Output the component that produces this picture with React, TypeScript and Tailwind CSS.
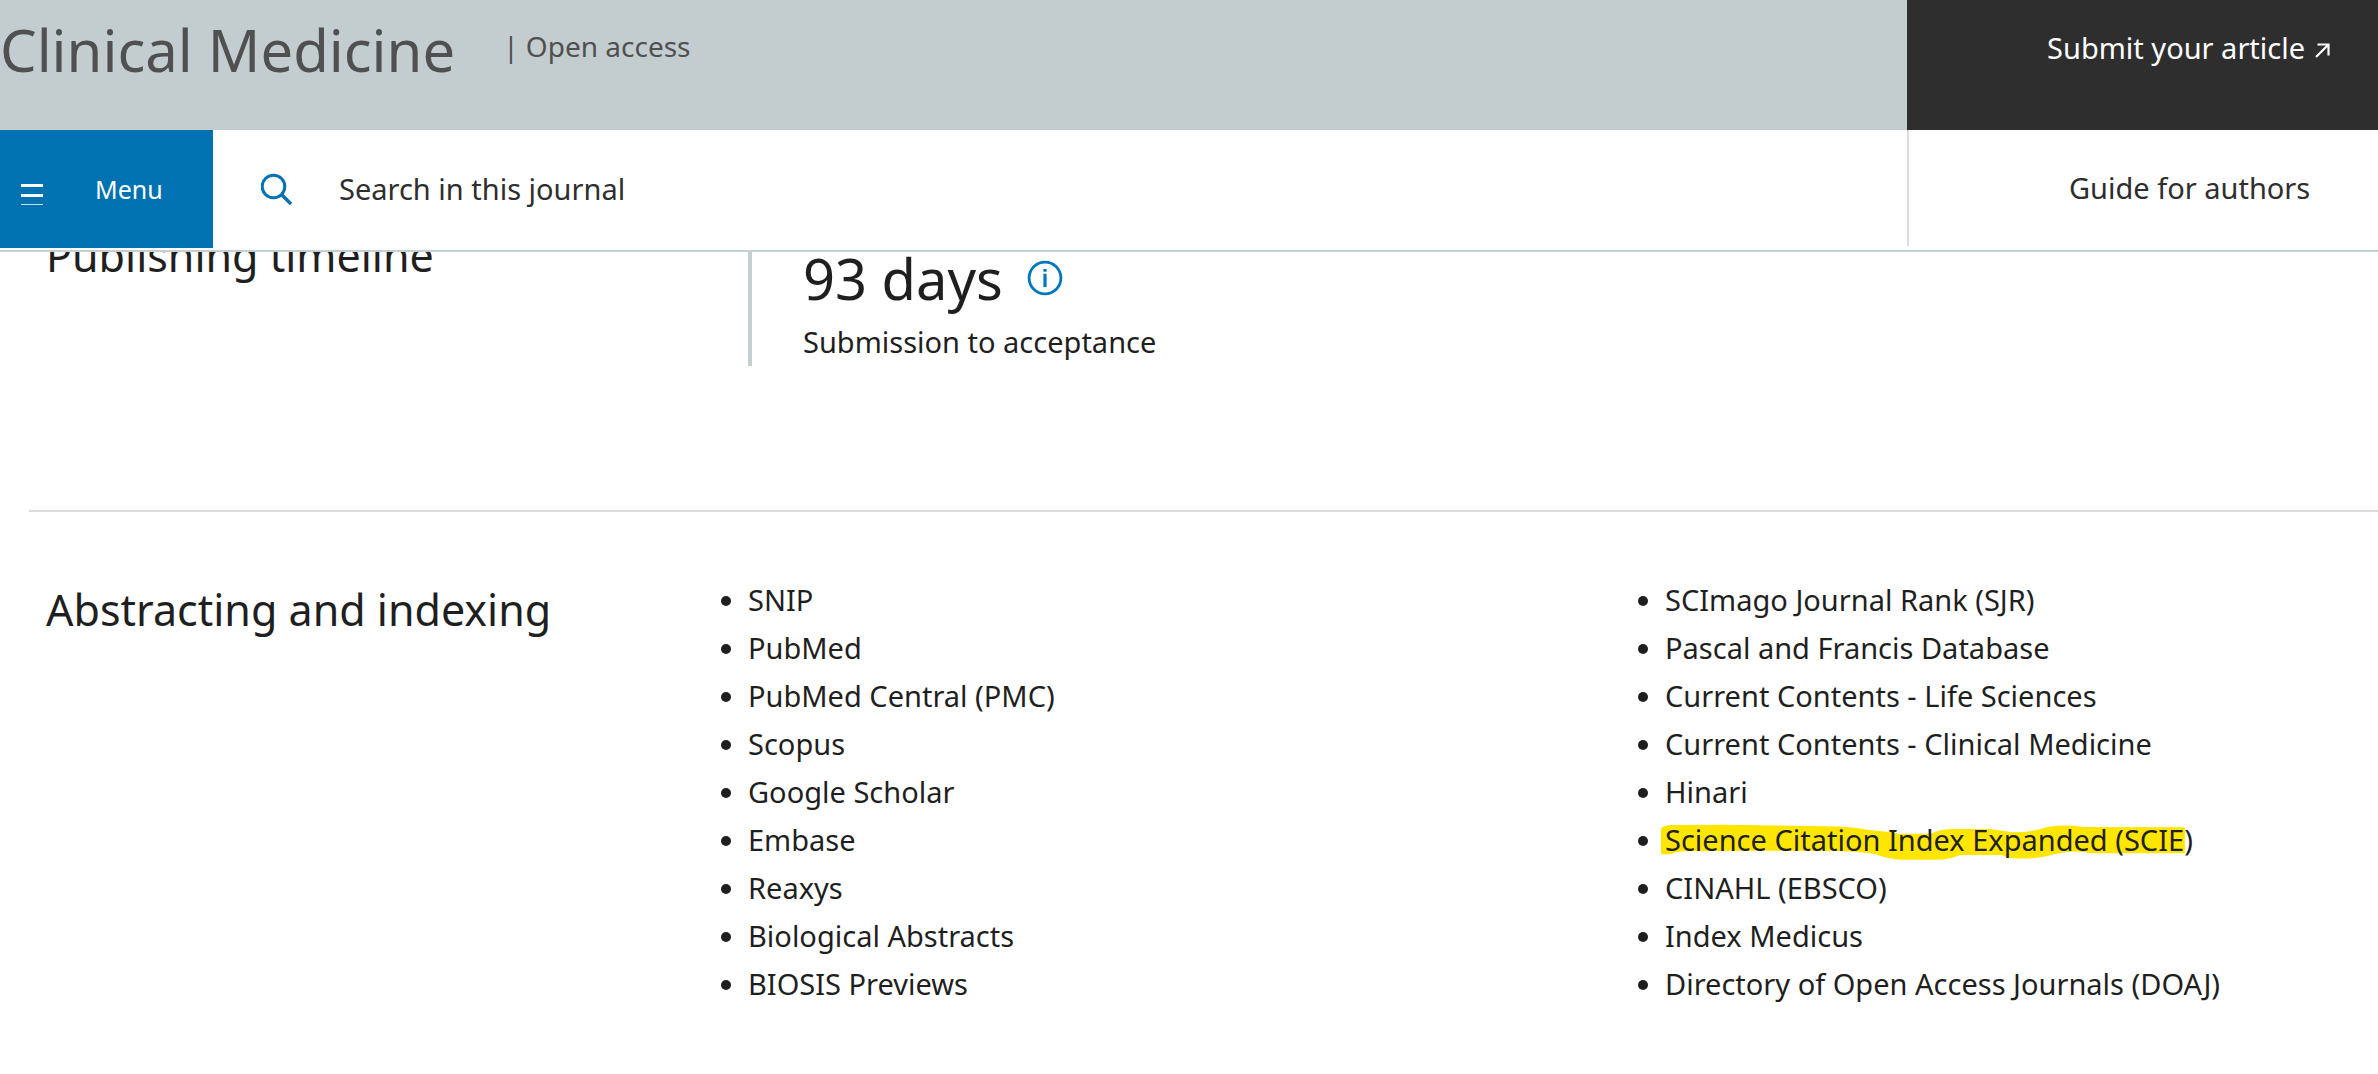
/**
 * Journal home page: sticky journal header, publishing timeline
 * and abstracting / indexing section
 */

const indexingLeft = [
  "SNIP",
  "PubMed",
  "PubMed Central (PMC)",
  "Scopus",
  "Google Scholar",
  "Embase",
  "Reaxys",
  "Biological Abstracts",
  "BIOSIS Previews",
];

const indexingRight = [
  "SCImago Journal Rank (SJR)",
  "Pascal and Francis Database",
  "Current Contents - Life Sciences",
  "Current Contents - Clinical Medicine",
  "Hinari",
  "Science Citation Index Expanded (SCIE)",
  "CINAHL (EBSCO)",
  "Index Medicus",
  "Directory of Open Access Journals (DOAJ)",
];

const MARKED = "Science Citation Index Expanded (SCIE)";

function MenuIcon() {
  return (
    <svg width="22" height="24" viewBox="0 0 22 24" aria-hidden="true">
      <path d="M0 1h22v3H0zM0 11h22v3H0z" fill="#fff" />
      <path d="M0 21h22v1H0z" fill="#fff" opacity="0.8" />
    </svg>
  );
}

function SearchIcon() {
  return (
    <svg
      width="32"
      height="32"
      viewBox="0 0 32 32"
      fill="none"
      stroke="#0072b1"
      strokeWidth="3"
      aria-hidden="true"
    >
      <circle cx="12.5" cy="13.5" r="11.3" />
      <path d="M20.5 21.5l9.5 9.5" strokeWidth="3.4" />
    </svg>
  );
}

function ArrowIcon() {
  return (
    <svg
      width="15"
      height="15"
      viewBox="0 0 15 15"
      fill="none"
      stroke="currentColor"
      strokeWidth="2.2"
      aria-hidden="true"
    >
      <path d="M2.5 1.5H13.5V12.5M13.5 1.5L1 14" />
    </svg>
  );
}

function InfoIcon() {
  return (
    <svg width="36" height="36" viewBox="0 0 36 36" fill="none" aria-hidden="true">
      <circle cx="18" cy="18" r="15.9" stroke="#0077bb" strokeWidth="2.8" />
      <path d="M16.4 9h3.2v2.8h-3.2zM16.4 13.8h3.2V27h-3.2z" fill="#0077bb" />
    </svg>
  );
}

// Hand-drawn marker stroke behind the text
function Marked({ text }: { text: string }) {
  return (
    <mark className="relative inline-block bg-transparent text-inherit">
      <svg
        className="absolute -left-1 right-1 top-2 h-9 w-full"
        viewBox="0 0 1448 100"
        preserveAspectRatio="none"
        aria-hidden="true"
      >
        <path
          fill="#ffe600"
          d="M0 12Q10 3 30 3L170 2L490 7Q540 10 580 18Q640 22 650 27H740Q765 14 800 14H900Q935 18 960 23Q1010 25 1060 8Q1110 0 1160 8L1437 9V81H1180Q1130 70 1080 84Q1040 96 990 96Q950 96 935 86H820Q790 100 750 99H660Q620 98 590 84Q560 78 480 75L240 74L60 76Q40 78 25 84H0Z"
        />
      </svg>
      <span className="relative">{text}</span>
    </mark>
  );
}

function IndexList({ items }: { items: string[] }) {
  return (
    <ul className="list-disc">
      {items.map((item) => (
        <li key={item}>{item === MARKED ? <Marked text={item} /> : item}</li>
      ))}
    </ul>
  );
}

export default function App() {
  return (
    <div className="min-h-screen bg-white font-['Noto_Sans',sans-serif] text-[29px] leading-[48px] text-[#1f1f1f]">
      {/* Header */}
      <header className="sticky top-0 z-10 border-b-2 border-[#c4cfd1] bg-white">
        <div className="flex h-[130px] bg-[#c3cdcf]">
          <div className="flex flex-1 items-start gap-12 pt-3.5 text-[#505050]">
            <h1 className="text-[58px] leading-[72px]">Clinical Medicine</h1>
            <p className="pt-2 text-[28px]">| Open access</p>
          </div>
          <div className="flex w-[19.8%] justify-center bg-[#2e2e2e] pl-[92px] pt-6 text-white">
            <a href="#submit" className="flex items-center gap-2.5 self-start">
              Submit your article
              <span className="pt-1">
                <ArrowIcon />
              </span>
            </a>
          </div>
        </div>

        <div className="flex h-[120px] items-start text-[#2e2e2e]">
          <button
            type="button"
            className="flex h-[118px] w-[213px] items-center gap-[52px] bg-[#0072b1] pl-[21px] text-[25px] text-white"
          >
            <span className="pt-3">
              <MenuIcon />
            </span>
            Menu
          </button>
          <label className="flex h-[118px] flex-1 items-center gap-[46px] pl-12">
            <SearchIcon />
            <input
              type="search"
              aria-label="Search in this journal"
              placeholder="Search in this journal"
              className="flex-1 bg-transparent outline-none placeholder:text-[#2e2e2e]"
            />
          </label>
          <div className="flex h-[116px] w-[19.8%] items-center justify-center border-l-2 border-[#dcdcdc] pl-[92px]">
            <a href="#guide">Guide for authors</a>
          </div>
        </div>
      </header>

      {/* Content scrolls under the sticky header */}
      <main className="-mt-[22px] pb-16">
        <section className="grid grid-cols-[702fr_1630fr] pl-[46px]">
          <h2 className="pt-0.5 text-[43px]">Publishing timeline</h2>
          <div className="border-l-4 border-[#c4cfd1] pl-[51px] pt-4">
            <div className="flex items-center gap-6">
              <span className="text-[56px] leading-[64px]">93 days</span>
              <button type="button" aria-label="More information">
                <InfoIcon />
              </button>
            </div>
            <p className="mt-2">Submission to acceptance</p>
          </div>
        </section>

        <hr className="ml-[29px] mt-36 border-t-2 border-[#dcdcdc]" />

        <section className="grid grid-cols-[702fr_917fr_713fr] pl-[46px] pt-16">
          <h2 className="pt-2.5 text-[43px]">Abstracting and indexing</h2>
          <IndexList items={indexingLeft} />
          <IndexList items={indexingRight} />
        </section>
      </main>
    </div>
  );
}
